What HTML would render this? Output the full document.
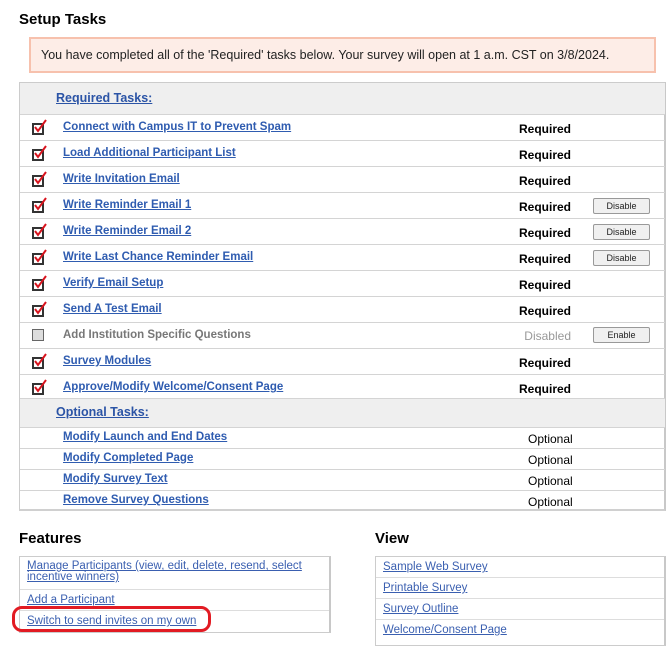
<!DOCTYPE html>
<html><head><meta charset="utf-8"><style>
*{margin:0;padding:0;box-sizing:border-box}
body{width:670px;height:639px;background:#fff;font-family:"Liberation Sans",sans-serif;position:relative;overflow:hidden;color:#000}
.a{position:absolute}
h2{position:absolute;font-size:15px;font-weight:bold}
.alert{left:29px;top:37px;width:627px;height:36px;background:#fdede7;border:2px solid #f7c1ad;font-size:12.5px;color:#222;padding:9px 0 0 10px}
.tbl{left:19px;top:82px;width:647px;height:429px;border:1px solid #ccc;border-right:2px solid #c8c8c8;border-bottom:2px solid #d0d0d0}
.row{position:absolute;left:0;width:645px;border-top:1px solid #d4d4d4;font-size:12px}
.hd{background:#efefef}
.hd a{position:absolute;left:36px;font-weight:bold;color:#2b54a6;text-decoration:underline;font-size:12.5px}
.lk{position:absolute;left:43px;font-weight:bold;color:#2f5cb0;text-decoration:underline;font-size:11.5px}
.gr{color:#777;text-decoration:none}
.st{position:absolute;right:94px;font-weight:bold}
.dis{color:#999;font-weight:normal}
.op{position:absolute;left:508px}
.btn{position:absolute;left:573px;width:57px;height:16px;border:1px solid #999;border-radius:2px;background:#f0f0f0;font-size:9px;text-align:center;line-height:14px;color:#222}
.cb{position:absolute;left:12px;width:12px;height:12px;border:2px solid #333;background:#fff}
.cb.off{border:1.5px solid #666;background:#ddd}
.cb svg{position:absolute;left:-2px;top:-7px}
.box{border:1px solid #ccc;border-right:2px solid #c8c8c8;font-size:11.5px}
.box div{border-top:1px solid #ddd;padding:0 0 0 7px;line-height:20px}
.box div:first-child{border-top:none}
.box a{color:#3a5fb0;text-decoration:underline}
</style></head><body>
<h2 style="left:19px;top:11px">Setup Tasks</h2>
<div class="a alert">You have completed all of the 'Required' tasks below. Your survey will open at 1 a.m. CST on 3/8/2024.</div>
<div class="a tbl">
<div class="row hd" style="top:0;height:31px;border-top:none"><a style="top:8px">Required Tasks:</a></div>
</div>
<script>
var t=document.querySelector('.tbl');
var items=[["Connect with Campus IT to Prevent Spam",0],["Load Additional Participant List",0],["Write Invitation Email",0],["Write Reminder Email 1",1],["Write Reminder Email 2",1],["Write Last Chance Reminder Email",1],["Verify Email Setup",0],["Send A Test Email",0],["Add Institution Specific Questions",2],["Survey Modules",0],["Approve/Modify Welcome/Consent Page",0]];
var chk='<svg width="16" height="16" viewBox="0 0 16 16"><path d="M3 9 L6 13 L14 2" stroke="#d8141e" stroke-width="2" fill="none"/></svg>';
var h='';
items.forEach(function(it,i){var top=31+i*26;
if(it[1]==2){h+='<div class="row" style="top:'+top+'px;height:26px"><span class="cb off" style="top:6px"></span><span class="lk gr" style="top:6px">'+it[0]+'</span><span class="st dis" style="top:6px">Disabled</span><span class="btn" style="top:4px">Enable</span></div>';}
else{h+='<div class="row" style="top:'+top+'px;height:26px"><span class="cb" style="top:8px">'+chk+'</span><span class="lk" style="top:6px">'+it[0]+'</span><span class="st" style="top:7px">Required</span>'+(it[1]?'<span class="btn" style="top:5px">Disable</span>':'')+'</div>';}
});
h+='<div class="row hd" style="top:315px;height:29px"><a style="top:6px">Optional Tasks:</a></div>';
["Modify Launch and End Dates","Modify Completed Page","Modify Survey Text","Remove Survey Questions"].forEach(function(s,i){var top=344+i*21;
h+='<div class="row" style="top:'+top+'px;height:21px"><span class="lk" style="top:3px">'+s+'</span><span class="op" style="top:4px">Optional</span></div>';});
t.insertAdjacentHTML('beforeend',h);
</script>
<h2 style="left:19px;top:530px">Features</h2>
<div class="a box" style="left:19px;top:556px;width:312px;height:77px">
<div style="line-height:11px;padding-top:4px;height:32px"><a>Manage Participants (view, edit, delete, resend, select incentive winners)</a></div>
<div><a>Add a Participant</a></div>
<div><a>Switch to send invites on my own</a></div>
</div>
<div class="a" style="left:12px;top:606px;width:199px;height:26px;border:3px solid #e21b23;border-radius:10px"></div>
<h2 style="left:375px;top:530px">View</h2>
<div class="a box" style="left:375px;top:556px;width:291px;height:90px">
<div><a>Sample Web Survey</a></div>
<div><a>Printable Survey</a></div>
<div><a>Survey Outline</a></div>
<div><a>Welcome/Consent Page</a></div>
</div>
</body></html>
